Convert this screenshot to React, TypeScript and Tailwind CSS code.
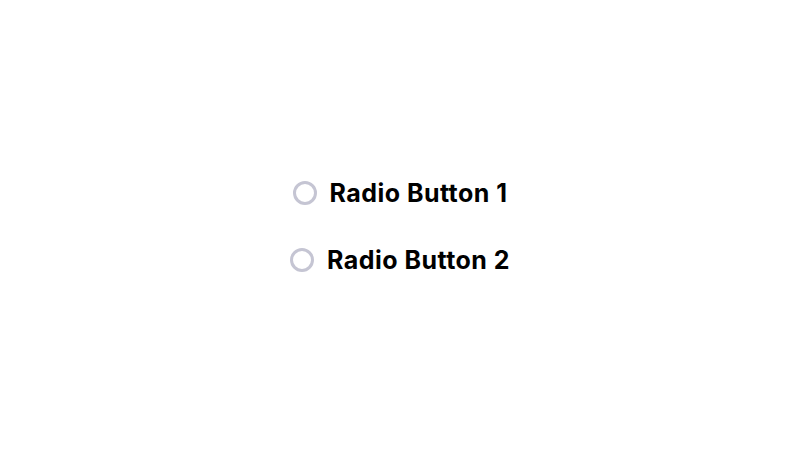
import React from "react";

function Radio({ label }: { label: string }) {
  return (
    <label className="flex items-center gap-[13px] cursor-pointer">
      <span className="w-6 h-6 rounded-full border-[3px] border-[#c5c5d3] bg-white" />
      <span className="text-[25px] leading-none font-bold text-black tracking-[0.45px]" style={{ fontFamily: "Inter, 'Noto Sans', sans-serif" }}>
        {label}
      </span>
    </label>
  );
}

export default function App() {
  return (
    <div className="w-[800px] h-[450px] bg-white flex flex-col items-center justify-center gap-[42px] pt-[3px]">
      <Radio label="Radio Button 1" />
      <Radio label="Radio Button 2" />
    </div>
  );
}
